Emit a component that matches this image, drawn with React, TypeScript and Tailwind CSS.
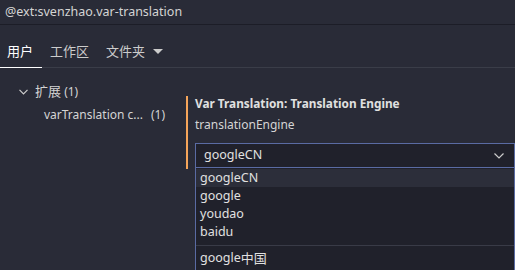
import React from "react";

const font = { fontFamily: '"Noto Sans", "Noto Sans CJK SC", sans-serif' };

export default function App() {
  return (
    <div className="w-[515px] h-[270px] bg-[#292b37] text-[#cccccc] text-[12px] overflow-hidden flex flex-col" style={font}>
      <div className="h-[25px] flex items-center pl-[5px] border-b border-[#1c1d27] text-[#d4d4d4] shrink-0 text-[12.5px]">
        @ext:svenzhao.var-translation
      </div>
      <div className="h-[43px] flex items-end border-b border-[#3a3d48] shrink-0 text-[13px]">
        <div className="flex items-center h-[30px]">
          <div className="w-[42px] pl-[7px] h-full flex items-center text-white border-b border-white -mb-px">用户</div>
          <div className="ml-[8px] h-full flex items-center">工作区</div>
          <div className="ml-[17px] h-full flex items-center gap-[8px]">
            文件夹
            <svg width="10" height="6" viewBox="0 0 10 6"><path d="M0 0h10L5 5z" fill="#cccccc" /></svg>
          </div>
        </div>
      </div>
      <div className="flex flex-1">
        <div className="w-[186px] shrink-0 pt-[14px]">
          <div className="flex items-center h-[19px] pl-[19px] gap-[7px] text-[#d4d4d4]">
            <svg width="9" height="6" viewBox="0 0 9 6"><path d="M0.5 0.8L4.5 4.8L8.5 0.8" stroke="#cccccc" strokeWidth="1.2" fill="none" /></svg>
            <span><span className="text-[13px]">扩展</span> (1)</span>
          </div>
          <div className="flex items-center h-[19px] pl-[44px] mt-[4px] text-[#d4d4d4] whitespace-nowrap">
            <span className="w-[107px]">varTranslation c...</span>
            <span>(1)</span>
          </div>
        </div>
        <div className="flex-1 flex flex-col pt-[26px]">
          <div className="flex">
            <div className="w-[2px] bg-[#f5a55a] mt-[2px] h-[73px]" />
            <div className="flex-1 pl-[7px]">
              <div className="font-bold text-[#e0e0e0] h-[19px] flex items-center text-[11.8px]">Var Translation: Translation Engine</div>
              <div className="h-[19px] flex items-center mt-[2px] text-[#d4d4d4]">translationEngine</div>
              <div className="mt-[9px] h-[25px] border border-[#5a6ba3] bg-[#20212b] flex items-center justify-between pl-[8px] pr-[10px] text-[#e0e0e0] text-[12.5px]">
                <span>googleCN</span>
                <svg width="10" height="6" viewBox="0 0 10 6"><path d="M0.5 0.5L5 5L9.5 0.5" stroke="#cccccc" strokeWidth="1.2" fill="none" /></svg>
              </div>
              <div className="border-x border-[#5a6ba3] bg-[#20212b] pt-[1px] text-[#e0e0e0] h-[110px] text-[12.5px]">
                <div className="h-[18px] flex items-center pl-[4px] bg-[#2c2e3a]">googleCN</div>
                <div className="h-[18px] flex items-center pl-[4px]">google</div>
                <div className="h-[18px] flex items-center pl-[4px]">youdao</div>
                <div className="h-[18px] flex items-center pl-[4px]">baidu</div>
                <div className="border-t border-[#393b47] mt-[4px] pt-[2px] h-[24px] flex items-center pl-[4px]">google<span className="text-[13px]">中国</span></div>
              </div>
            </div>
          </div>
        </div>
      </div>
    </div>
  );
}
